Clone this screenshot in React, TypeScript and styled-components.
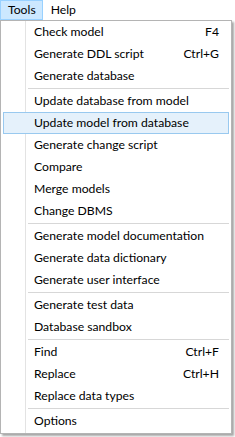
import React from 'react';
import styled, { createGlobalStyle } from 'styled-components';

const GlobalStyle = createGlobalStyle`
  html, body {
    margin: 0;
    padding: 0;
    background: #ffffff;
  }
  body {
    font-family: Lato, 'Noto Sans', sans-serif;
    font-size: 12.2px;
    color: #000000;
  }
`;

type Entry = { label: string; shortcut?: string; active?: boolean } | 'sep';

const MenuData: Entry[] = [
  { label: 'Check model', shortcut: 'F4' },
  { label: 'Generate DDL script', shortcut: 'Ctrl+G' },
  { label: 'Generate database' },
  'sep',
  { label: 'Update database from model' },
  { label: 'Update model from database', active: true },
  { label: 'Generate change script' },
  { label: 'Compare' },
  { label: 'Merge models' },
  { label: 'Change DBMS' },
  'sep',
  { label: 'Generate model documentation' },
  { label: 'Generate data dictionary' },
  { label: 'Generate user interface' },
  'sep',
  { label: 'Generate test data' },
  { label: 'Database sandbox' },
  'sep',
  { label: 'Find', shortcut: 'Ctrl+F' },
  { label: 'Replace', shortcut: 'Ctrl+H' },
  { label: 'Replace data types' },
  'sep',
  { label: 'Options' },
];

const StyledWindow = styled.div`
  width: 235px;
  height: 437px;
  overflow: hidden;
  background: #ffffff;
`;

const StyledMenuBar = styled.div`
  display: flex;
  height: 20px;
  background: #ffffff;
`;

const StyledBarItem = styled.div<{ $open?: boolean }>`
  box-sizing: border-box;
  height: 20px;
  padding: 0 6px 0 7px;
  line-height: 18px;
  border: 1px solid ${(p) => (p.$open ? '#99d1ff' : 'transparent')};
  background: ${(p) => (p.$open ? '#cce8ff' : 'transparent')};
`;

const StyledDropdown = styled.div`
  box-sizing: border-box;
  width: 232px;
  padding: 0 2px 1px;
  border: 1px solid #b4b4b4;
  background: linear-gradient(#e3e3e3, #e3e3e3) no-repeat 24px 0 / 1px 100%, #ffffff;
  box-shadow: 2px 2px 2px rgba(0, 0, 0, 0.35);
`;

const StyledItem = styled.div<{ $active?: boolean }>`
  box-sizing: border-box;
  display: flex;
  align-items: center;
  height: 22px;
  padding: 0 9px 0 30px;
  line-height: 20px;
  white-space: nowrap;
  border: 1px solid ${(p) => (p.$active ? '#99c9ef' : 'transparent')};
  background: ${(p) => (p.$active ? '#e5f1fb' : 'transparent')};
`;

const StyledLabel = styled.span`
  flex: 1;
`;

const StyledShortcut = styled.span`
  padding-left: 16px;
`;

const StyledSeparator = styled.div`
  height: 1px;
  margin: 1px 0 1px 25px;
  background: #d7d7d7;
`;

export default function App() {
  return (
    <StyledWindow>
      <GlobalStyle />
      <StyledMenuBar>
        <StyledBarItem $open>Tools</StyledBarItem>
        <StyledBarItem>Help</StyledBarItem>
      </StyledMenuBar>
      <StyledDropdown>
        {MenuData.map((entry, index) =>
          entry === 'sep' ? (
            <StyledSeparator key={index} />
          ) : (
            <StyledItem key={index} $active={entry.active}>
              <StyledLabel>{entry.label}</StyledLabel>
              {entry.shortcut && <StyledShortcut>{entry.shortcut}</StyledShortcut>}
            </StyledItem>
          ),
        )}
      </StyledDropdown>
    </StyledWindow>
  );
}
